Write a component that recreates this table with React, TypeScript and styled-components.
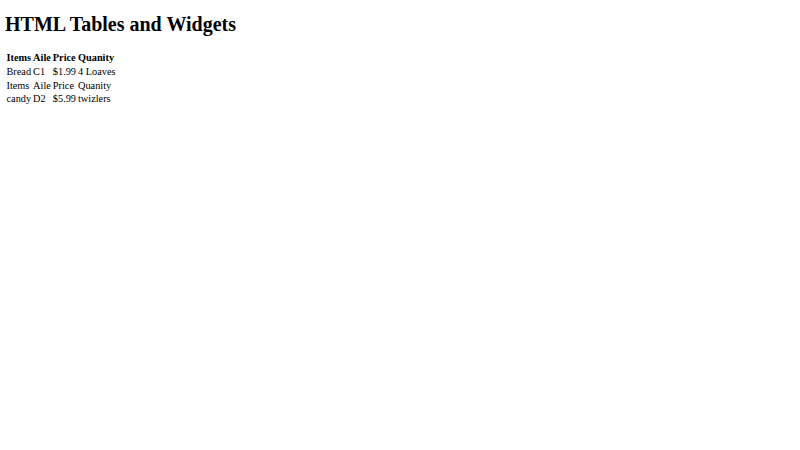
import React from "react";
import styled, { createGlobalStyle } from "styled-components";

const Global = createGlobalStyle`
  body {
    margin: 5px;
    font-family: "Liberation Serif", "Times New Roman", serif;
    color: #000;
    background: #fff;
  }
`;

const Title = styled.h1`
  font-size: 20px;
  line-height: 23px;
  font-weight: bold;
  margin: 8px 0 15px;
`;

const Table = styled.table`
  border-collapse: separate;
  border-spacing: 1px;
  font-size: 10.3px;
  line-height: 12.8px;
`;

const Cell = styled.td<{ $head?: boolean }>`
  padding: 0 0.5px;
  font-weight: ${(p) => (p.$head ? "bold" : "normal")};
  text-align: left;
`;

const rows: { head?: boolean; cells: string[] }[] = [
  { head: true, cells: ["Items", "Aile", "Price", "Quanity"] },
  { cells: ["Bread", "C1", "$1.99", "4 Loaves"] },
  { cells: ["Items", "Aile", "Price", "Quanity"] },
  { cells: ["candy", "D2", "$5.99", "twizlers"] },
];

export default function App() {
  return (
    <>
      <Global />
      <Title>HTML Tables and Widgets</Title>
      <Table>
        <tbody>
          {rows.map((r, i) => (
            <tr key={i}>
              {r.cells.map((c, j) => (
                <Cell key={j} as={r.head ? "th" : "td"} $head={r.head}>
                  {c}
                </Cell>
              ))}
            </tr>
          ))}
        </tbody>
      </Table>
    </>
  );
}
